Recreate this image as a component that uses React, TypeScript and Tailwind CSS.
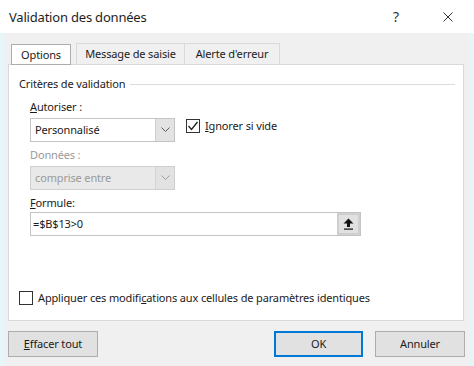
import React from "react";

const font = { fontFamily: '"Noto Sans", "Open Sans", sans-serif' };

function Chevron({ color = "#606060" }: { color?: string }) {
	return (
		<svg width="9" height="6" viewBox="0 0 9 6">
			<polyline points="0.5,0.5 4.5,4.5 8.5,0.5" fill="none" stroke={color} strokeWidth="1" />
		</svg>
	);
}

function Select({ value, disabled }: { value: string; disabled?: boolean }) {
	return (
		<div
			className={`flex h-[24px] w-[145px] border ${
				disabled ? "border-[#cfcfcf] bg-[#e9e9e9] text-[#9a9a9a]" : "border-[#c4c4c4] bg-white text-[#1b1b1b]"
			}`}
		>
			<div className="flex flex-1 items-center pl-[4px]">{value}</div>
			<div
				className={`flex w-[19px] items-center justify-center border-l ${
					disabled ? "border-[#d4d4d4] bg-[#e2e2e2]" : "border-[#cfcfcf] bg-[#e3e3e3]"
				}`}
			>
				<Chevron color={disabled ? "#a0a0a0" : "#5a5a5a"} />
			</div>
		</div>
	);
}

function Checkbox({ checked }: { checked?: boolean }) {
	return (
		<div className="flex h-[14px] w-[14px] shrink-0 items-center justify-center border border-[#333] bg-white">
			{checked && (
				<svg width="12" height="12" viewBox="0 0 12 12">
					<polyline points="1.5,6 4.5,9.5 10.5,2" fill="none" stroke="#222" strokeWidth="1.3" />
				</svg>
			)}
		</div>
	);
}

export default function App() {
	return (
		<div
			className="flex h-[366px] w-[474px] flex-col overflow-hidden bg-[#e7f5f8] text-[11px] leading-[16px] tracking-[-0.15px] text-[#1b1b1b]"
			style={font}
		>
			<div className="flex h-[33px] shrink-0 items-center bg-white pl-[9px] pr-[21px]">
				<div className="text-[13px] tracking-[-0.2px] text-[#1e1e1e]">Validation des données</div>
				<div className="ml-auto mr-[44px] text-[14px] text-[#333]">?</div>
				<svg width="10" height="10" viewBox="0 0 10 10">
					<path d="M0.5 0.5 L9.5 9.5 M9.5 0.5 L0.5 9.5" stroke="#333" strokeWidth="1" />
				</svg>
			</div>
			<div className="mx-[5px] flex flex-1 flex-col bg-[#f0f0f0] pl-[3px] pr-[5px] pt-[10px]">
				<div className="flex items-end pl-[3px]">
					<div className="relative z-10 -mb-px flex h-[21px] w-[60px] items-center justify-center border border-[#adadad] bg-white">
						Options
					</div>
					<div className="ml-[5px] flex h-[21px] w-[109px] items-center justify-center border border-b-0 border-[#d9d9d9] bg-[#f0f0f0]">
						Message de saisie
					</div>
					<div className="flex h-[21px] w-[95px] items-center justify-center border border-b-0 border-l-0 border-[#d9d9d9] bg-[#f0f0f0]">
						Alerte d'erreur
					</div>
				</div>
				<div className="flex h-[257px] shrink-0 flex-col overflow-hidden border border-[#d9d9d9] bg-white pl-[10px] pr-[8px]">
					<div className="mt-[11px] flex h-[16px] items-center">
						<span>Critères de validation</span>
						<div className="ml-[5px] h-px flex-1 bg-[#dcdcdc]" />
					</div>
					<div className="flex flex-col pl-[11px]">
						<div className="mt-[7px] h-[16px]">
							<span className="underline">A</span>utoriser :
						</div>
						<div className="mt-[3px] flex items-start">
							<Select value="Personnalisé" />
							<div className="ml-[11px] flex items-center">
								<Checkbox checked />
								<span className="ml-[5px]">
									<span className="underline">I</span>gnorer si vide
								</span>
							</div>
						</div>
						<div className="mt-[5px] h-[16px] text-[#9a9a9a]">Données :</div>
						<div className="mt-[3px]">
							<Select value="comprise entre" disabled />
						</div>
						<div className="mt-[5px] h-[16px]">
							<span className="underline">F</span>ormule:
						</div>
						<div className="mt-[1px] flex h-[24px] w-[331px] border border-[#c4c4c4] bg-white">
							<div className="flex flex-1 items-center pl-[2px]">=$B$13&gt;0</div>
							<div className="flex w-[23px] items-center justify-center border-[2px] border-[#cfcfcf] bg-[#e1e1e1]">
								<svg width="11" height="12" viewBox="0 0 11 12">
									<path d="M5.5 0.5 L10.5 5.5 L7 5.5 L7 9 L4 9 L4 5.5 L0.5 5.5 Z" fill="#111" />
									<rect x="1" y="10.5" width="9" height="1.2" fill="#111" />
								</svg>
							</div>
						</div>
					</div>
					<div className="mt-[54px] flex h-[16px] items-center">
						<Checkbox />
						<span className="ml-[5px] whitespace-nowrap">
							Appliquer ces modifi<span className="underline">c</span>ations aux cellules de paramètres identiques
						</span>
					</div>
				</div>
				<div className="mr-[-1px] mt-[10px] flex">
					<div className="flex h-[26px] w-[90px] items-center justify-center border border-[#adadad] bg-[#e1e1e1]">
						<span>
							<span className="underline">E</span>ffacer tout
						</span>
					</div>
					<div className="ml-auto flex h-[26px] w-[89px] items-center justify-center border-[2px] border-[#0078d7] bg-[#e1e1e1]">
						OK
					</div>
					<div className="ml-[12px] flex h-[26px] w-[90px] items-center justify-center border border-[#adadad] bg-[#e1e1e1]">
						Annuler
					</div>
				</div>
			</div>
		</div>
	);
}
